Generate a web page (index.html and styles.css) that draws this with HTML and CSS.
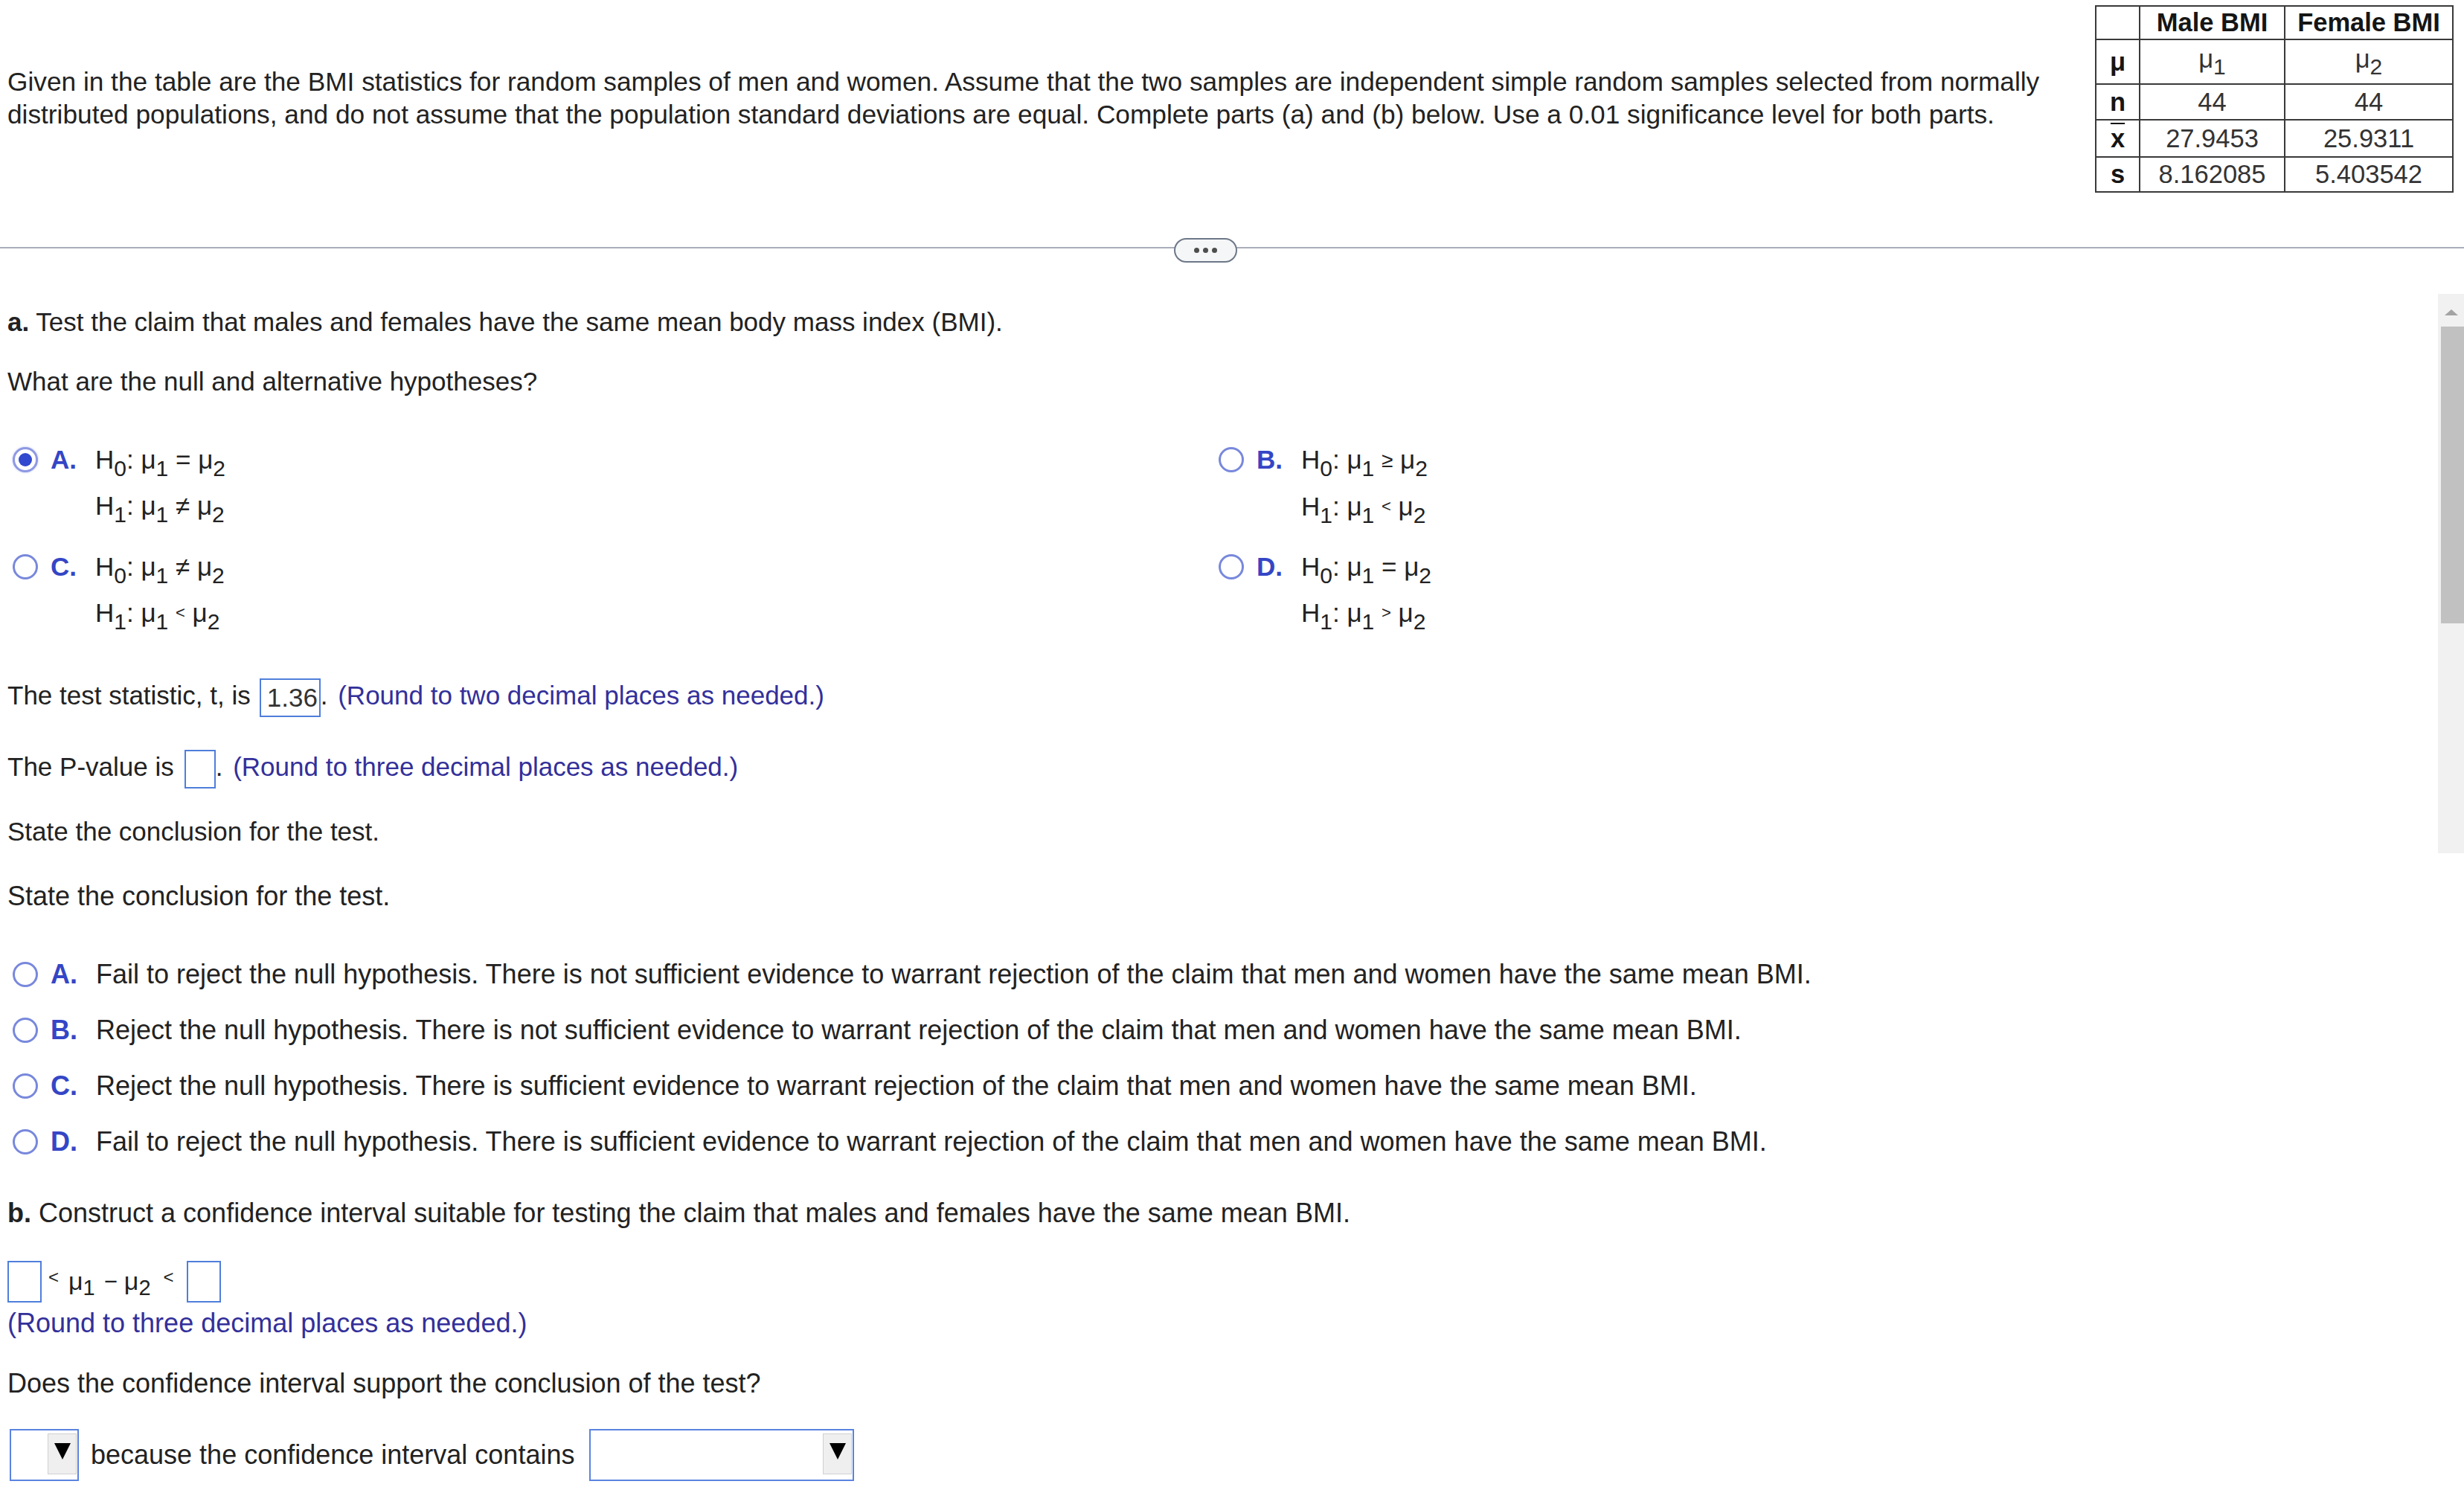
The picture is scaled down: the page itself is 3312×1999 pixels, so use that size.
FILE: index.html
```html
<!DOCTYPE html>
<html lang="en">
<head>
<meta charset="utf-8">
<title>BMI hypothesis test</title>
<link rel="stylesheet" href="styles.css">
</head>
<body>
<div class="top">
  <p class="intro">Given in the table are the BMI statistics for random samples of men and women. Assume that the two samples are independent simple random samples selected from normally distributed populations, and do not assume that the population standard deviations are equal. Complete parts (a) and (b) below. Use a 0.01 significance level for both parts.</p>
  <table class="stats">
    <colgroup><col class="c1"><col class="c2"><col class="c3"></colgroup>
    <tr class="r-h"><th></th><th>Male BMI</th><th>Female BMI</th></tr>
    <tr class="r-mu"><th>μ</th><td>μ<sub>1</sub></td><td>μ<sub>2</sub></td></tr>
    <tr class="r-n"><th>n</th><td>44</td><td>44</td></tr>
    <tr class="r-x"><th><span class="xbar">x</span></th><td>27.9453</td><td>25.9311</td></tr>
    <tr class="r-s"><th>s</th><td>8.162085</td><td>5.403542</td></tr>
  </table>
</div>

<div class="divider"><span class="pill"><i></i><i></i><i></i></span></div>

<div class="main">
  <div class="content">
    <div class="sec1">
      <p class="line q-a"><b>a.</b> Test the claim that males and females have the same mean body mass index (BMI).</p>
      <p class="line q-what">What are the null and alternative hypotheses?</p>

      <div class="hyps">
        <div class="opt">
          <span class="radio on"></span>
          <span class="letter">A.</span>
          <div class="hyp">
            <div>H<sub>0</sub>: μ<sub>1</sub> = μ<sub>2</sub></div>
            <div>H<sub>1</sub>: μ<sub>1</sub> ≠ μ<sub>2</sub></div>
          </div>
        </div>
        <div class="opt">
          <span class="radio"></span>
          <span class="letter">B.</span>
          <div class="hyp">
            <div>H<sub>0</sub>: μ<sub>1</sub> <span class="rel">≥</span> μ<sub>2</sub></div>
            <div>H<sub>1</sub>: μ<sub>1</sub> <span class="rel sm">&lt;</span> μ<sub>2</sub></div>
          </div>
        </div>
        <div class="opt">
          <span class="radio"></span>
          <span class="letter">C.</span>
          <div class="hyp">
            <div>H<sub>0</sub>: μ<sub>1</sub> ≠ μ<sub>2</sub></div>
            <div>H<sub>1</sub>: μ<sub>1</sub> <span class="rel sm">&lt;</span> μ<sub>2</sub></div>
          </div>
        </div>
        <div class="opt">
          <span class="radio"></span>
          <span class="letter">D.</span>
          <div class="hyp">
            <div>H<sub>0</sub>: μ<sub>1</sub> = μ<sub>2</sub></div>
            <div>H<sub>1</sub>: μ<sub>1</sub> <span class="rel sm">&gt;</span> μ<sub>2</sub></div>
          </div>
        </div>
      </div>

      <p class="ans stat-line">The test statistic, t, is<span class="box tbox">1.36</span>. <span class="hint">(Round to two decimal places as needed.)</span></p>
      <p class="ans pval-line">The P-value is<span class="box pbox"></span>. <span class="hint">(Round to three decimal places as needed.)</span></p>
      <p class="line state1">State the conclusion for the test.</p>
    </div>

    <div class="sec2">
      <p class="line state2">State the conclusion for the test.</p>
      <div class="concl">
        <div class="copt"><span class="radio"></span><span class="letter">A.</span><span>Fail to reject the null hypothesis. There is not sufficient evidence to warrant rejection of the claim that men and women have the same mean BMI.</span></div>
        <div class="copt"><span class="radio"></span><span class="letter">B.</span><span>Reject the null hypothesis. There is not sufficient evidence to warrant rejection of the claim that men and women have the same mean BMI.</span></div>
        <div class="copt"><span class="radio"></span><span class="letter">C.</span><span>Reject the null hypothesis. There is sufficient evidence to warrant rejection of the claim that men and women have the same mean BMI.</span></div>
        <div class="copt"><span class="radio"></span><span class="letter">D.</span><span>Fail to reject the null hypothesis. There is sufficient evidence to warrant rejection of the claim that men and women have the same mean BMI.</span></div>
      </div>

      <p class="line q-b"><b>b.</b> Construct a confidence interval suitable for testing the claim that males and females have the same mean BMI.</p>

      <div class="interval">
        <span class="ibox"></span>
        <span class="lt lt1">&lt;</span>
        <span class="mu mu1">μ</span><span class="isub">1</span>
        <span class="minus">−</span>
        <span class="mu mu2">μ</span><span class="isub">2</span>
        <span class="lt lt2">&lt;</span>
        <span class="ibox ibox2"></span>
      </div>
      <p class="line hint round2">(Round to three decimal places as needed.)</p>
      <p class="line does">Does the confidence interval support the conclusion of the test?</p>

      <div class="selects">
        <span class="select sel1"><span class="sel-btn"><i class="tri"></i></span></span>
        <span class="because">because the confidence interval contains</span>
        <span class="select sel2"><span class="sel-btn"><i class="tri"></i></span></span>
      </div>
    </div>
  </div>

  <div class="scrollbar">
    <span class="sb-arrow"></span>
    <span class="sb-thumb"></span>
  </div>
</div>
</body>
</html>
```

FILE: styles.css
```css
html, body {
  margin: 0;
  padding: 0;
  overflow: hidden;
}

body {
  width: 3312px;
  height: 1999px;
  background: #ffffff;
  color: #222222;
  font-family: "Liberation Sans", Arial, sans-serif;
}

p { margin: 0; }

/* ---------- top area ---------- */
.top {
  display: flex;
  justify-content: space-between;
  align-items: flex-start;
  height: 332px;
  box-sizing: border-box;
  padding: 7px 14px 0 10px;
}

.intro {
  margin-top: 81px;
  width: 2770px;
  font-size: 35.25px;
  line-height: 44px;
}

.stats {
  border-collapse: collapse;
  font-size: 34.5px;
  color: #333333;
}

.stats col.c1 { width: 59px; }
.stats col.c2 { width: 195px; }
.stats col.c3 { width: 226px; }

.stats th,
.stats td {
  border: 2.5px solid #3a3a3a;
  padding: 0;
  text-align: center;
  line-height: 1;
}

.stats th {
  font-weight: bold;
  color: #151515;
}

.stats .r-h { height: 45px; }
.stats .r-mu { height: 60px; }
.stats .r-n { height: 48px; }
.stats .r-x { height: 50px; }
.stats .r-s { height: 47px; }

.stats sub {
  font-size: 30px;
  vertical-align: -9px;
  line-height: 1;
}

.xbar {
  text-decoration: overline;
  text-decoration-thickness: 2px;
}

/* ---------- divider ---------- */
.divider {
  position: relative;
  height: 2px;
  background: #a9aebb;
}

.pill {
  position: absolute;
  left: 1578px;
  top: -12px;
  width: 85px;
  height: 33px;
  box-sizing: border-box;
  border: 2.5px solid #6d7787;
  border-radius: 17px;
  background: #f5f6f8;
  display: flex;
  justify-content: center;
  align-items: center;
  gap: 5px;
}

.pill i {
  width: 7px;
  height: 7px;
  border-radius: 50%;
  background: #4d4d4d;
}

/* ---------- main ---------- */
.main {
  display: flex;
}

.content {
  flex: 1;
  padding-left: 10px;
}

.sec1 { font-size: 35px; }
.sec2 { font-size: 36px; }

.line { line-height: 44px; }

.q-a { margin-top: 77px; }
.q-what { margin-top: 36px; }

.hint { color: #33309a; }

/* hypotheses */
.hyps {
  margin-top: 52px;
  padding-left: 7px;
  display: grid;
  grid-template-columns: 1621px auto;
  row-gap: 19px;
}

.opt {
  display: flex;
  align-items: flex-start;
}

.radio {
  flex: none;
  width: 34px;
  height: 34px;
  box-sizing: border-box;
  border: 3px solid #7888dc;
  border-radius: 50%;
  background: #ffffff;
}

.radio.on {
  border-color: #8e99e3;
  display: flex;
  align-items: center;
  justify-content: center;
  box-shadow: 0 0 3px rgba(110, 125, 220, 0.45);
}

.radio.on::after {
  content: "";
  width: 18px;
  height: 18px;
  border-radius: 50%;
  background: #3149cf;
}

.opt .radio { margin-top: 14px; }

.letter {
  flex: none;
  margin-left: 17px;
  width: 60px;
  font-weight: bold;
  color: #3446c6;
}

.opt .letter { line-height: 62px; }

.hyp div {
  line-height: 62px;
  white-space: nowrap;
}

.hyp sub {
  font-size: 30px;
  vertical-align: -10px;
  line-height: 1;
}

.rel { font-size: 28px; vertical-align: 2px; }
.rel.sm { font-size: 22px; vertical-align: 5px; }

/* answer lines */
.ans { line-height: 56px; }
.stat-line { margin-top: 52px; }
.pval-line { margin-top: 39px; }
.state1 { margin-top: 36px; }

.box {
  display: inline-block;
  box-sizing: border-box;
  height: 52px;
  border: 2px solid #4f7edb;
  vertical-align: middle;
  line-height: 48px;
  margin-left: 12px;
  color: #333333;
}

.tbox { width: 82px; padding-left: 8px; }
.pbox { width: 42px; margin-left: 14px; }

.ans .hint { margin-left: 4px; }

/* section 2 */
.state2 { margin-top: 43px; }

.concl { margin-top: 61px; padding-left: 7px; }

.copt {
  display: flex;
  align-items: center;
  height: 44px;
  white-space: nowrap;
}

.copt + .copt { margin-top: 31px; }

.copt .letter { width: 61px; }

.q-b { margin-top: 52px; }

.interval {
  display: flex;
  align-items: center;
  height: 56px;
  margin-top: 42px;
  font-size: 34px;
}

.ibox {
  flex: none;
  width: 46px;
  height: 56px;
  box-sizing: border-box;
  border: 2px solid #4f7edb;
}

.ibox2 { margin-left: 17px; }

.lt {
  font-size: 24px;
  align-self: flex-start;
  margin-top: 8px;
}

.lt1 { margin-left: 9px; }
.lt2 { margin-left: 17px; }

.mu1 { margin-left: 13px; }
.mu2 { margin-left: 9px; }

.isub {
  font-size: 29px;
  margin-top: 18px;
}

.minus { margin-left: 12px; font-size: 31px; }

.round2 { margin-top: 6px; }
.does { margin-top: 37px; }

.selects {
  display: flex;
  align-items: center;
  height: 70px;
  margin-top: 39px;
}

.select {
  flex: none;
  display: flex;
  justify-content: flex-end;
  box-sizing: border-box;
  height: 70px;
  border: 2px solid #5a83e0;
  padding: 4px 1px 7px 0;
  background: #ffffff;
}

.sel1 { width: 93px; margin-left: 3px; }
.sel2 { width: 356px; margin-left: 20px; }

.sel-btn {
  width: 39px;
  box-sizing: border-box;
  background: #efefef;
  border: 1px solid #d0d0d0;
  display: flex;
  justify-content: center;
  align-items: flex-start;
  padding-top: 12px;
}

.tri {
  width: 0;
  height: 0;
  border-left: 11px solid transparent;
  border-right: 11px solid transparent;
  border-top: 22px solid #000000;
}

.because { margin-left: 16px; }

/* scrollbar */
.scrollbar {
  flex: none;
  width: 35px;
  height: 752px;
  margin-top: 61px;
  background: #f1f1f1;
  display: flex;
  flex-direction: column;
  align-items: flex-end;
}

.sb-arrow {
  align-self: center;
  margin-top: 21px;
  width: 0;
  height: 0;
  border-left: 9px solid transparent;
  border-right: 9px solid transparent;
  border-bottom: 8px solid #a3a3a3;
}

.sb-thumb {
  margin-top: 15px;
  width: 31px;
  height: 399px;
  background: #c1c1c1;
}
```
